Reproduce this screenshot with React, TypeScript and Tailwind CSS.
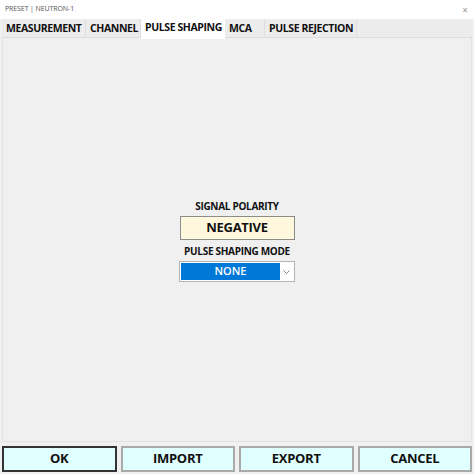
import React from "react";

const font = { fontFamily: '"Open Sans", "Noto Sans", sans-serif' };

export default function App() {
  const tabs = [
    { label: "MEASUREMENT", w: "w-[84px]" },
    { label: "CHANNEL", w: "w-[55px]" },
    { label: "PULSE SHAPING", w: "w-[84px]", active: true },
    { label: "MCA", w: "w-[40px]" },
    { label: "PULSE REJECTION", w: "w-[92px]" },
  ];
  return (
    <div className="w-[474px] h-[474px] bg-white flex flex-col overflow-hidden" style={font}>
      <div className="h-[19px] flex items-center justify-between pl-[5px] pr-[6px]">
        <span className="text-[7px] text-[#555] tracking-[-0.1px]">PRESET | NEUTRON-1</span>
        <span className="text-[10px] text-[#999] leading-none">×</span>
      </div>
      <div className="flex-1 flex flex-col bg-[#f0f0f0] px-[2px]">
        <div className="h-[19px] flex items-end bg-[#f0f0f0] relative">
          <div className="absolute left-0 right-0 top-0 bottom-0 bg-[#ececec] border-b border-[#dcdcdc]" />
          {tabs.map((t) => (
            <div
              key={t.label}
              className={
                "relative flex items-center whitespace-nowrap shrink-0 font-bold text-[10.5px] tracking-[-0.4px] text-[#111] " +
                t.w +
                (t.active
                  ? " h-[21px] bg-white pl-[4px] z-10 -mb-[1px] pb-[2px]"
                  : " h-[19px] border-r border-[#dedede] pl-[4px]")
              }
            >
              {t.label}
            </div>
          ))}
        </div>
        <div className="h-[404px] bg-[#f0f0f0] border border-t-0 border-[#e2e2e2] flex flex-col items-center justify-center pt-[2px]">
          <div className="flex flex-col items-center">
            <div className="text-[10px] font-bold text-[#111] tracking-[-0.3px] leading-[14px] whitespace-nowrap">SIGNAL POLARITY</div>
            <div className="mt-[3px] w-[115px] h-[24px] bg-[#fff8dc] border border-[#8c8c8c] flex items-center justify-center text-[13px] font-bold text-[#111] tracking-[-0.3px]">
              NEGATIVE
            </div>
            <div className="mt-[4px] text-[10px] font-bold text-[#111] tracking-[-0.3px] leading-[14px] whitespace-nowrap">PULSE SHAPING MODE</div>
            <div className="mt-[3px] w-[116px] h-[21px] bg-white border border-[#b4b4b4] flex items-stretch p-[1px]">
              <div className="flex-1 bg-[#0078d7] text-white text-[11px] font-semibold flex items-center justify-center">NONE</div>
              <div className="w-[13px] flex items-center justify-center">
                <svg width="7" height="4" viewBox="0 0 7 4">
                  <path d="M0.5 0.5 L3.5 3.5 L6.5 0.5" stroke="#777" strokeWidth="0.9" fill="none" />
                </svg>
              </div>
            </div>
          </div>
        </div>
        <div className="flex-1 flex items-center gap-[4px] pb-[1px] pt-[3px]">
          {["OK", "IMPORT", "EXPORT", "CANCEL"].map((b, i) => (
            <div
              key={b}
              className={
                "flex-1 h-[26px] bg-[#e0ffff] flex items-center justify-center text-[13px] font-bold text-[#111] tracking-[-0.3px] " +
                (i === 0 ? "border-2 border-[#333]" : "border-2 border-[#a9a9a9]")
              }
            >
              {b}
            </div>
          ))}
        </div>
      </div>
    </div>
  );
}
